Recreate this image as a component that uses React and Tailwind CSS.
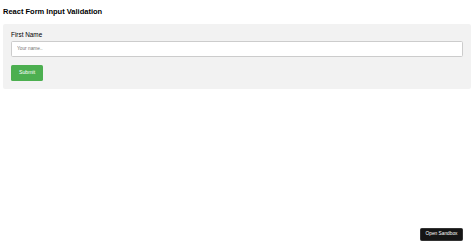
import { useState } from "react";

export default function App() {
  const [name, setName] = useState("");

  return (
    <div className="relative min-h-[248px] bg-white px-[3px] pt-[8px] font-['Liberation_Sans',Arial,sans-serif] text-black">
      <h3 className="text-[7.5px] font-bold leading-[8.6px]">
        React Form Input Validation
      </h3>

      {/* Form panel */}
      <form
        className="mt-[7.4px] rounded-[2px] bg-[#f2f2f2] px-[8px] pb-[8px] pt-[7.5px]"
        onSubmit={(e) => e.preventDefault()}
      >
        <label className="block text-[6.4px] leading-[7.4px]">First Name</label>
        <input
          type="text"
          value={name}
          onChange={(e) => setName(e.target.value)}
          placeholder="Your name.."
          className="mt-[2px] block h-[16px] w-full rounded-[1.6px] border border-[#cccccc] bg-white px-[5px] text-[4.8px] outline-none placeholder:text-[#757575]"
        />
        <button
          type="submit"
          className="mt-[7px] h-[16px] w-[32px] rounded-[1.6px] bg-[#4caf50] text-[5.2px] text-white"
        >
          Submit
        </button>
      </form>

      {/* Sandbox overlay button */}
      <button className="absolute bottom-[7px] right-[11px] h-[13px] rounded-[1.5px] border border-[#333333] bg-[#151515] px-[4.5px] text-[4.8px] leading-none text-white">
        Open Sandbox
      </button>
    </div>
  );
}
